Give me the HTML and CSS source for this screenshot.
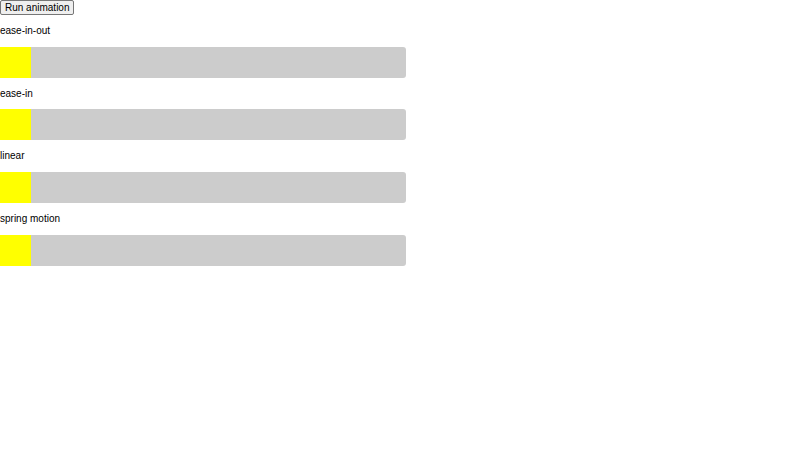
FILE: index.html
```html
<!DOCTYPE html>
<html>
<head>
<meta charset="utf-8">
<link rel="stylesheet" href="styles.css">
</head>
<body>
<button class="run">Run animation</button>
<div class="list">
  <div class="item">
    <div class="label">ease-in-out</div>
    <div class="track"><div class="box"></div></div>
  </div>
  <div class="item">
    <div class="label">ease-in</div>
    <div class="track"><div class="box"></div></div>
  </div>
  <div class="item">
    <div class="label">linear</div>
    <div class="track"><div class="box"></div></div>
  </div>
  <div class="item">
    <div class="label">spring motion</div>
    <div class="track"><div class="box"></div></div>
  </div>
</div>
</body>
</html>
```

FILE: styles.css
```css
html, body {
  margin: 0;
  padding: 0;
  background: #fff;
}
body {
  font-family: "Liberation Sans", Arial, sans-serif;
  font-size: 10px;
  color: #000;
}
.run {
  display: block;
  font-family: "Liberation Sans", Arial, sans-serif;
  font-size: 10px;
  height: 15px;
  padding: 0 4px;
  margin: 0;
  border: 1px solid #767676;
  border-radius: 2px;
  background: #efefef;
  color: #000;
}
.list {
  display: flex;
  flex-direction: column;
}
.label {
  height: 12px;
  line-height: 12px;
  margin: 10px 0 9.67px;
}
.track {
  width: 406px;
  height: 31px;
  background: #cccccc;
  border-radius: 0 3px 3px 0;
}
.box {
  width: 31px;
  height: 31px;
  background: #ffff00;
}
```
